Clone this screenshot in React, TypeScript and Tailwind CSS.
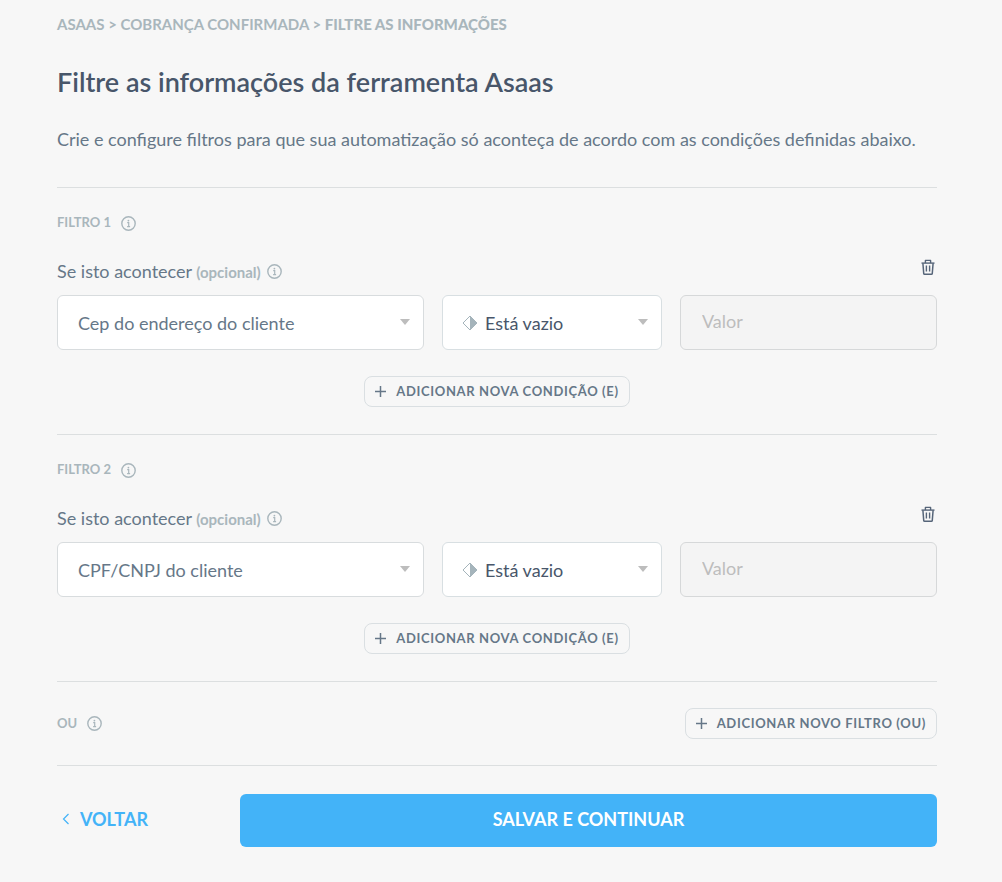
/**
 * FilterStep
 *
 * Automation step where the user sets the conditions that must be met
 */

import React, { useState } from 'react';

const FIELD_OPTIONS = ['Cep do endereço do cliente', 'CPF/CNPJ do cliente'];
const OPERATOR_OPTIONS = ['Está vazio'];

const InfoIcon: React.FC = () => (
  <svg className="w-[15px] h-[15px] shrink-0" viewBox="0 0 15 15" fill="none" stroke="currentColor" aria-hidden="true">
    <circle cx="7.5" cy="7.5" r="6.7" strokeWidth={1.4} />
    <path d="M6.2 6.7h1.5v3.8M6.1 10.6h3" strokeWidth={1.2} />
    <circle cx="7.4" cy="4.6" r="0.9" fill="currentColor" stroke="none" />
  </svg>
);

const TrashIcon: React.FC = () => (
  <svg className="w-4 h-4" viewBox="0 0 16 16" fill="none" stroke="currentColor" aria-hidden="true">
    <path d="M1.5 4.1h13" strokeWidth={1.4} />
    <path d="M5.4 4V1.4h5.2V4" strokeWidth={1.4} strokeLinejoin="round" />
    <path d="M2.9 4.2l.8 10.1q.1.9.9.9h6.8q.8 0 .9-.9l.8-10.1" strokeWidth={1.5} />
    <path d="M6.4 6.6v5.8M9.6 6.6v5.8" strokeWidth={1.4} />
  </svg>
);

const PlusIcon: React.FC = () => (
  <svg className="w-[11px] h-[11px]" viewBox="0 0 11 11" stroke="currentColor" strokeWidth={1.5} aria-hidden="true">
    <path d="M5.5 0v11M0 5.5h11" />
  </svg>
);

const DiamondIcon: React.FC<{ className?: string }> = ({ className = '' }) => (
  <svg className={`w-4 h-4 text-[#a5b4bb] ${className}`} viewBox="0 0 16 16" aria-hidden="true">
    <path d="M8 1L15 8L8 15L1 8z" fill="none" stroke="currentColor" strokeWidth={1} strokeLinejoin="round" />
    <path d="M8 1L15 8L8 15z" fill="currentColor" />
  </svg>
);

const Caret: React.FC = () => (
  <svg
    className="absolute right-[13px] top-6 w-3 h-[6px] text-[#bdbdbd] pointer-events-none"
    viewBox="0 0 12 6"
    fill="currentColor"
    aria-hidden="true"
  >
    <path d="M1 0h10L6 6z" />
  </svg>
);

interface AddButtonProps {
  children: React.ReactNode;
  onClick?: () => void;
}

const AddButton: React.FC<AddButtonProps> = ({ children, onClick }) => (
  <button
    type="button"
    onClick={onClick}
    className="flex items-center gap-[10px] h-[31px] px-[10px] border border-[#dadfe2] rounded-lg text-[13px] font-bold tracking-wider uppercase text-[#667788]"
  >
    <PlusIcon />
    {children}
  </button>
);

interface FilterSectionProps {
  index: number;
  field: string;
}

const FilterSection: React.FC<FilterSectionProps> = ({ index, field }) => {
  const [selected, setSelected] = useState(field);
  const fieldId = `filter-${index}-field`;

  return (
    <section className="border-t border-[#dcdfe0] pt-[26px] pb-[27px]">
      <div className="flex items-center gap-[10px] h-[18px] text-[#a9b6bc]">
        <h2 className="text-[13px] font-bold uppercase">Filtro {index}</h2>
        <InfoIcon />
      </div>

      <div className="flex items-center justify-between mt-[27px] h-6">
        <div className="flex items-center gap-[6px] text-[#a9b6bc]">
          <label htmlFor={fieldId} className="text-lg leading-6 text-[#667788]">
            Se isto acontecer <span className="text-[15px] font-bold text-[#a9b6bc]">(opcional)</span>
          </label>
          <InfoIcon />
        </div>
        <button type="button" aria-label="Excluir" className="self-start mr-px text-[#566579]">
          <TrashIcon />
        </button>
      </div>

      {/* Field, operator and value */}
      <div className="grid grid-cols-[367fr_220fr_257fr] gap-[18px] mt-3">
        <div className="relative">
          <select
            id={fieldId}
            value={selected}
            onChange={(e) => setSelected(e.target.value)}
            className="appearance-none block w-full h-[55px] pl-5 pr-8 bg-white border border-[#d8dcde] rounded-md text-lg text-[#667788]"
          >
            {FIELD_OPTIONS.map((option) => (
              <option key={option}>{option}</option>
            ))}
          </select>
          <Caret />
        </div>
        <div className="relative">
          <select
            aria-label="Condição"
            className="appearance-none block w-full h-[55px] pl-[42px] pr-8 bg-white border border-[#d8dfe2] rounded-md text-lg text-[#48566a]"
          >
            {OPERATOR_OPTIONS.map((option) => (
              <option key={option}>{option}</option>
            ))}
          </select>
          <DiamondIcon className="absolute left-5 top-5 pointer-events-none" />
          <Caret />
        </div>
        <input
          type="text"
          disabled
          aria-label="Valor"
          placeholder="Valor"
          className="block w-full min-w-0 h-[55px] px-[21px] pb-1 bg-[#f4f4f4] border border-[#d6d8d9] rounded-md text-lg placeholder:text-[#bdbdbd]"
        />
      </div>

      <div className="flex justify-center mt-[26px]">
        <AddButton>Adicionar nova condição (E)</AddButton>
      </div>
    </section>
  );
};

const App: React.FC = () => {
  return (
    <div className="min-h-screen bg-[#f7f7f7] pl-[57px] pr-[65px] py-3 font-['Lato',sans-serif] text-[#667788]">
      <nav aria-label="Navegação" className="text-[15px] leading-6 font-bold uppercase text-[#a9b6bc]">
        Asaas &gt; Cobrança confirmada &gt; <strong>Filtre as informações</strong>
      </nav>

      <h1 className="mt-[30px] text-[27px] leading-8 font-semibold text-[#48566a]">
        Filtre as informações da ferramenta Asaas
      </h1>
      <p className="mt-[29px] mb-9 text-lg leading-6">
        Crie e configure filtros para que sua automatização só aconteça de acordo com as condições definidas abaixo.
      </p>

      <FilterSection index={1} field="Cep do endereço do cliente" />
      <FilterSection index={2} field="CPF/CNPJ do cliente" />

      {/* New filter group */}
      <section className="flex items-center justify-between border-y border-[#dcdfe0] py-[26px]">
        <div className="flex items-center gap-[10px] text-[#a9b6bc]">
          <h2 className="text-[13px] font-bold uppercase">Ou</h2>
          <InfoIcon />
        </div>
        <AddButton>Adicionar novo filtro (OU)</AddButton>
      </section>

      {/* Footer actions */}
      <div className="flex mt-7">
        <button
          type="button"
          className="flex items-center gap-[10px] w-[183px] h-[53px] pl-[5px] pb-[3px] text-lg font-bold uppercase text-[#43b3f8]"
        >
          <svg className="w-2 h-3" viewBox="0 0 8 12" fill="none" stroke="currentColor" strokeWidth={1.2} aria-hidden="true">
            <path d="M6.5 1L1.5 6l5 5" />
          </svg>
          Voltar
        </button>
        <button type="submit" className="grow h-[53px] pb-[3px] rounded-md bg-[#43b3f8] text-lg font-bold uppercase text-white">
          Salvar e continuar
        </button>
      </div>
    </div>
  );
};

export default App;
